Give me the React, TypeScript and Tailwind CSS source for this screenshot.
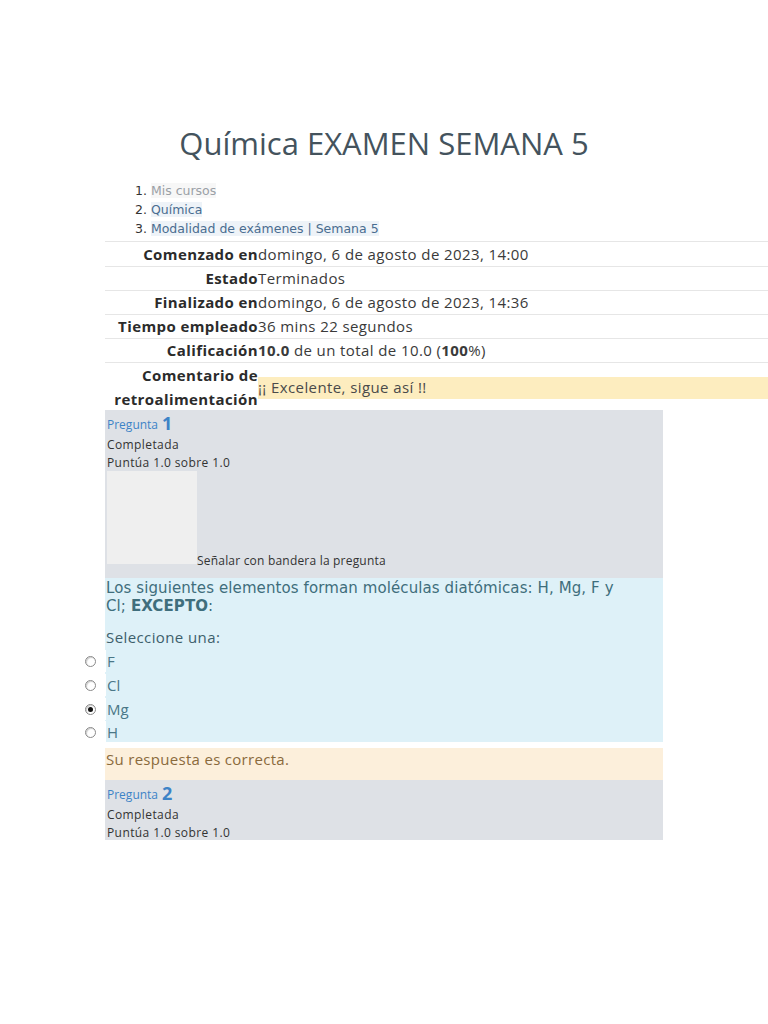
import React from 'react';

const pop = { fontFamily: '"Open Sans", "Noto Sans", sans-serif' };
const dv = { fontFamily: '"DejaVu Sans", Verdana, sans-serif' };

const rows = [
  { label: 'Comenzado en', value: <>domingo, 6 de agosto de 2023, 14:00</> },
  { label: 'Estado', value: <>Terminados</> },
  { label: 'Finalizado en', value: <>domingo, 6 de agosto de 2023, 14:36</> },
  { label: 'Tiempo empleado', value: <>36 mins 22 segundos</> },
  {
    label: 'Calificación',
    value: (
      <>
        <b>10.0</b> de un total de 10.0 (<b>100</b>%)
      </>
    ),
  },
];

const options = [
  { id: 'F', checked: false },
  { id: 'Cl', checked: false },
  { id: 'Mg', checked: true },
  { id: 'H', checked: false },
];

function Radio({ checked }: { checked: boolean }) {
  return (
    <span className="w-[11px] h-[11px] rounded-full border border-[#8a8a8a] bg-white flex items-center justify-center shadow-[inset_1px_1px_1px_rgba(0,0,0,0.2)]">
      {checked && <span className="w-[5px] h-[5px] rounded-full bg-[#111]" />}
    </span>
  );
}

function QuestionHeader({ n }: { n: number }) {
  return (
    <div className="text-[12px] leading-[18px] text-[#333] tracking-[0.4px]" style={pop}>
      <div className="text-[#3d83c7] h-[24px] flex items-end pb-[2px] tracking-normal">
        Pregunta <span className="font-bold text-[18px] leading-[22px] ml-[4px]">{n}</span>
      </div>
      <div>Completada</div>
      <div>Puntúa 1.0 sobre 1.0</div>
    </div>
  );
}

export default function App() {
  return (
    <div className="w-[768px] h-[1024px] bg-white text-[#333] overflow-hidden">
      <h1
        className="pt-[121px] text-center text-[31px] leading-[44px] text-[#44535d] font-normal"
        style={pop}
      >
        Química EXAMEN SEMANA 5
      </h1>

      <ol className="mt-[16px] ml-[135px] text-[12.5px] leading-[19px] text-[#333]" style={dv}>
        <li>
          1. <span className="text-[#9aa0a6] bg-[#f7f7f7]">Mis cursos</span>
        </li>
        <li>
          2. <span className="text-[#4a6d90] bg-[#eef3f8]">Química</span>
        </li>
        <li>
          3. <span className="text-[#4a6d90] bg-[#eef3f8]">Modalidad de exámenes | Semana 5</span>
        </li>
      </ol>

      <div className="ml-[105px] mt-[3px] text-[15px] tracking-[0.4px]" style={pop}>
        {rows.map((r, i) => (
          <div
            key={r.label}
            className={`flex items-center border-t border-[#e6e6e6] ${i === 0 ? 'h-[25px]' : 'h-[24px]'}`}
          >
            <div className="w-[153px] shrink-0 text-right font-bold text-[#2b2b2b]">{r.label}</div>
            <div className="text-[#3a3a3a]">{r.value}</div>
          </div>
        ))}
        <div className="flex items-center border-t border-[#e6e6e6] h-[48px]">
          <div className="w-[153px] shrink-0 text-right font-bold text-[#2b2b2b] leading-[24px]">
            Comentario de
            <br />
            retroalimentación
          </div>
          <div className="flex-1 bg-[#fdedbf] h-[22px] mt-[2px] flex items-center text-[#4a4a4a]">
            ¡¡ Excelente, sigue así !!
          </div>
        </div>
      </div>

      <div className="ml-[105px] w-[558px]">
        <div className="bg-[#dee1e6] h-[168px] pl-[2px] pt-[2px]">
          <QuestionHeader n={1} />
          <div className="flex items-end mt-[-1px]">
            <div className="w-[90px] h-[93px] bg-[#efefef]" />
            <span className="text-[12px] leading-[14px] mb-[-4px] text-[#333] tracking-[0.2px]" style={pop}>
              Señalar con bandera la pregunta
            </span>
          </div>
        </div>

        <div className="bg-[#def1f8] h-[164px] pl-[1px] pt-[1px] text-[#3f6e7c]">
          <p className="text-[15px] leading-[18px] tracking-[0.1px]" style={dv}>
            Los siguientes elementos forman moléculas diatómicas: H, Mg, F y
            <br />
            Cl; <b>EXCEPTO</b>:
          </p>
          <p className="mt-[12px] text-[15px] leading-[20px] text-[#3d5f6c] tracking-[0.4px]" style={pop}>
            Seleccione una:
          </p>
          <div className="text-[15px] mt-[2px]" style={pop}>
            {options.map((o, i) => (
              <div key={o.id} className={`flex items-center ${i === 3 ? 'h-[22px]' : 'h-[24px]'}`}>
                <div className="w-[26px] h-[22px] ml-[-26px] mr-[1px] bg-white flex items-center pl-[5px]">
                  <Radio checked={o.checked} />
                </div>
                <span className="text-[#4a7787]">{o.id}</span>
              </div>
            ))}
          </div>
        </div>

        <div
          className="mt-[6px] bg-[#fcefdb] h-[32px] pl-[1px] text-[15px] leading-[22px] text-[#8a6a3c] tracking-[0.3px]"
          style={pop}
        >
          Su respuesta es correcta.
        </div>

        <div className="bg-[#dee1e6] h-[60px] pl-[2px] pt-[2px]">
          <QuestionHeader n={2} />
        </div>
      </div>
    </div>
  );
}
